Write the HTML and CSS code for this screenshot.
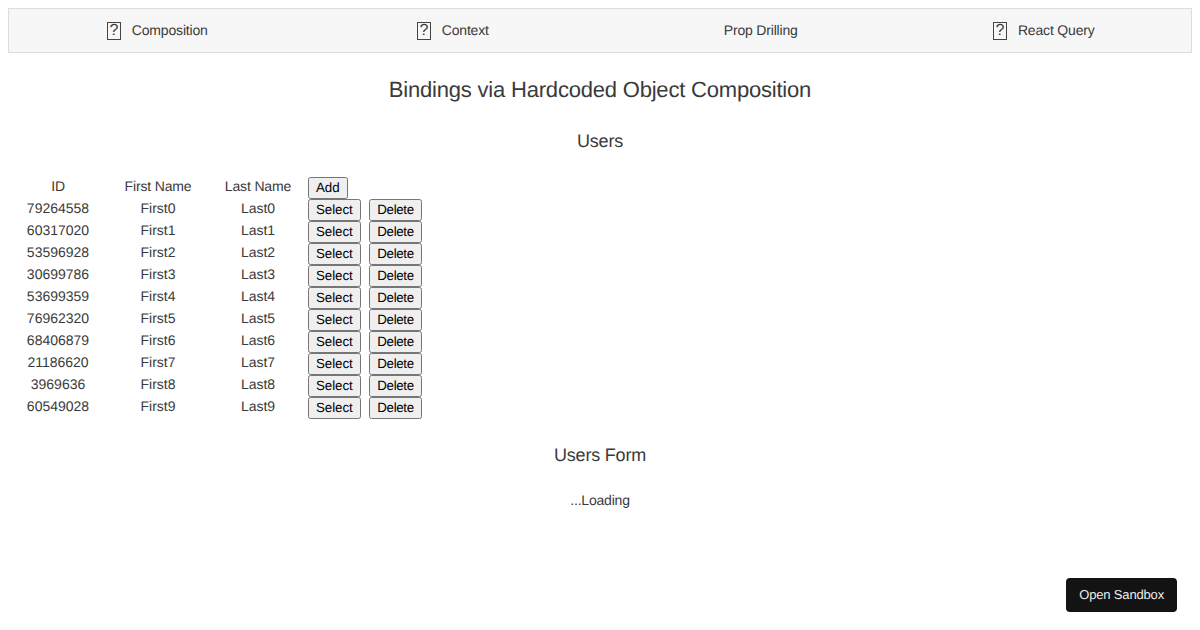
FILE: index.html
```html
<!DOCTYPE html>
<html lang="en">
<head>
    <meta charset="UTF-8">
    <meta name="viewport" content="width=device-width, initial-scale=1.0">
    <title>Bindings via Hardcoded Object Composition</title>
    <link rel="stylesheet" href="styles.css">
</head>
<body>
    <nav class="menu">
        <a class="menu-item"><span class="tofu">?</span>Composition</a>
        <a class="menu-item"><span class="tofu">?</span>Context</a>
        <a class="menu-item"><span class="tofu empty"></span>Prop Drilling</a>
        <a class="menu-item"><span class="tofu">?</span>React Query</a>
    </nav>
    <h1>Bindings via Hardcoded Object Composition</h1>
    <h2>Users</h2>
    <div class="users">
        <div class="row head"><div class="cell">ID</div><div class="cell">First Name</div><div class="cell">Last Name</div><div class="actions"><button>Add</button></div></div>
        <div class="row"><div class="cell">79264558</div><div class="cell">First0</div><div class="cell">Last0</div><div class="actions"><button>Select</button><button class="delete">Delete</button></div></div>
        <div class="row"><div class="cell">60317020</div><div class="cell">First1</div><div class="cell">Last1</div><div class="actions"><button>Select</button><button class="delete">Delete</button></div></div>
        <div class="row"><div class="cell">53596928</div><div class="cell">First2</div><div class="cell">Last2</div><div class="actions"><button>Select</button><button class="delete">Delete</button></div></div>
        <div class="row"><div class="cell">30699786</div><div class="cell">First3</div><div class="cell">Last3</div><div class="actions"><button>Select</button><button class="delete">Delete</button></div></div>
        <div class="row"><div class="cell">53699359</div><div class="cell">First4</div><div class="cell">Last4</div><div class="actions"><button>Select</button><button class="delete">Delete</button></div></div>
        <div class="row"><div class="cell">76962320</div><div class="cell">First5</div><div class="cell">Last5</div><div class="actions"><button>Select</button><button class="delete">Delete</button></div></div>
        <div class="row"><div class="cell">68406879</div><div class="cell">First6</div><div class="cell">Last6</div><div class="actions"><button>Select</button><button class="delete">Delete</button></div></div>
        <div class="row"><div class="cell">21186620</div><div class="cell">First7</div><div class="cell">Last7</div><div class="actions"><button>Select</button><button class="delete">Delete</button></div></div>
        <div class="row"><div class="cell">3969636</div><div class="cell">First8</div><div class="cell">Last8</div><div class="actions"><button>Select</button><button class="delete">Delete</button></div></div>
        <div class="row"><div class="cell">60549028</div><div class="cell">First9</div><div class="cell">Last9</div><div class="actions"><button>Select</button><button class="delete">Delete</button></div></div>
    </div>
    <h2 class="form-title">Users Form</h2>
    <div class="loading">...Loading</div>
    <a class="sandbox">Open Sandbox</a>
</body>
</html>
```

FILE: styles.css
```css
body{
    margin: 8px;
    background: #fff;
    color: #3a3a3a;
    font-family: "Liberation Sans", Arial, sans-serif;
    font-size: 14px;
    text-rendering: geometricPrecision;
}
.menu{
    display: flex;
    height: 45px;
    box-sizing: border-box;
    background: #f7f7f7;
    border: 1px solid #ddd;
}
.menu-item{
    flex: 1;
    display: flex;
    align-items: center;
    justify-content: center;
    padding-bottom: 2px;
    letter-spacing: -0.18px;
}
.tofu{
    display: inline-block;
    box-sizing: border-box;
    width: 14px;
    height: 18px;
    margin: 3px 11px 0 1px;
    border: 1.5px solid #444;
    font-size: 16px;
    line-height: 15px;
    text-align: center;
}
.empty{
    visibility: hidden;
}
h1{
    margin: 24px 0 0;
    font-size: 22px;
    font-weight: normal;
    line-height: 26px;
    letter-spacing: -0.2px;
    text-align: center;
}
h2{
    margin: 27px 0 0;
    font-size: 18px;
    font-weight: normal;
    line-height: 22px;
    letter-spacing: -0.2px;
    text-align: center;
}
.users{
    margin-top: 24px;
}
.row{
    display: flex;
    height: 22px;
}
.head .cell{
    letter-spacing: -0.15px;
}
.cell{
    width: 100px;
    line-height: 20px;
    text-align: center;
}
.actions{
    display: flex;
    gap: 8.5px;
    padding-top: 1px;
}
button{
    height: 22px;
    padding: 0 6px 2px;
    font-family: "Liberation Sans", Arial, sans-serif;
    font-size: 13.33px;
    letter-spacing: -0.05px;
    text-rendering: geometricPrecision;
}
.delete{
    letter-spacing: -0.33px;
}
.form-title{
    margin-top: 26px;
}
.loading{
    margin-top: 26px;
    letter-spacing: -0.2px;
    text-align: center;
}
.sandbox{
    position: fixed;
    right: 23px;
    bottom: 18px;
    padding: 0 13px;
    background: #131313;
    border-radius: 4px;
    color: #eee;
    font-size: 13px;
    letter-spacing: -0.17px;
    line-height: 34px;
}
```
